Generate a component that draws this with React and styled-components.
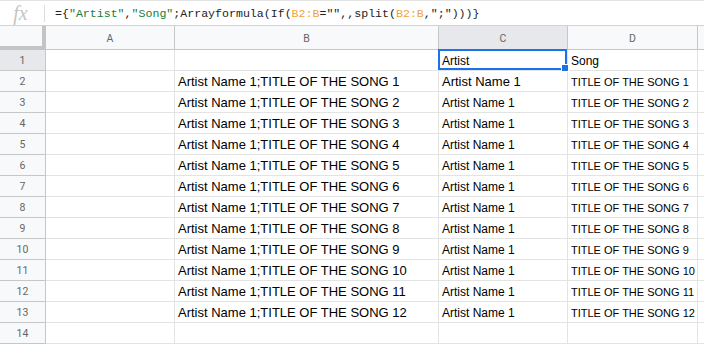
import React from "react";
import styled, { createGlobalStyle } from "styled-components";

const Global = createGlobalStyle`
  html, body { margin: 0; padding: 0; background: #fff; overflow: hidden; }
  body { font-family: "Liberation Sans", Arial, sans-serif; }
`;

const Page = styled.div`
  width: 704px;
  height: 348px;
  overflow: hidden;
  background: #fff;
`;

const FormulaBar = styled.div`
  height: 26px;
  box-sizing: border-box;
  border-top: 1px solid #e3e3e3;
  border-bottom: 1px solid #d3d3d3;
  display: flex;
  align-items: center;
`;

const Fx = styled.div`
  width: 45px;
  height: 17px;
  box-sizing: border-box;
  border-right: 1px solid #dadce0;
  display: flex;
  align-items: center;
  justify-content: center;
  font-family: "Liberation Serif", serif;
  font-style: italic;
  font-size: 20px;
  color: #c4c4c4;
  padding-right: 3px;
`;

const Formula = styled.div`
  padding-left: 10px;
  font-family: "Liberation Mono", monospace;
  font-size: 11.6px;
  color: #222;
  white-space: pre;
`;

const Str = styled.span`
  color: ${(p) => p.$c};
`;

const Grid = styled.div`
  display: grid;
  grid-template-columns: 46px 129px 264px 129px 130px 1fr;
  grid-auto-rows: 21px;
  grid-template-rows: 24px;
`;

const Corner = styled.div`
  box-sizing: border-box;
  background: #f8f9fa;
  border-right: 4px solid #c4c4c4;
  border-bottom: 4px solid #c4c4c4;
`;

const ColHead = styled.div`
  box-sizing: border-box;
  background: ${(p) => (p.$sel ? "#e6e8eb" : "#f8f9fa")};
  border-right: 1px solid #c7c7c7;
  border-bottom: 1px solid #c7c7c7;
  display: flex;
  align-items: center;
  justify-content: center;
  padding-top: 1px;
  font-family: Roboto, "Liberation Sans", sans-serif;
  font-size: 10.5px;
  color: #666;
`;

const RowHead = styled.div`
  box-sizing: border-box;
  background: ${(p) => (p.$sel ? "#e6e8eb" : "#f8f9fa")};
  border-right: 1px solid #c7c7c7;
  border-bottom: 1px solid #c7c7c7;
  display: flex;
  align-items: center;
  justify-content: center;
  font-family: Roboto, "Liberation Sans", sans-serif;
  font-size: 10.5px;
  color: #666;
`;

const Cell = styled.div`
  position: relative;
  box-sizing: border-box;
  border-right: 1px solid #e2e3e3;
  border-bottom: 1px solid #e2e3e3;
  display: flex;
  align-items: flex-end;
  padding: 0 3px 1px 3px;
  white-space: nowrap;
  overflow: hidden;
  font-family: "Liberation Sans", Arial, sans-serif;
  font-size: ${(p) => p.$size || 13}px;
  line-height: 16px;
  color: #000;
`;

const Selection = styled.div`
  position: absolute;
  left: -1px;
  top: -1px;
  right: 0;
  bottom: 0;
  border: 2px solid #1a73e8;
  pointer-events: none;
`;

const Handle = styled.div`
  position: absolute;
  right: -4px;
  bottom: -4px;
  width: 6px;
  height: 6px;
  background: #1a73e8;
  border: 1px solid #fff;
`;

const SelCell = styled(Cell)`
  overflow: visible;
  z-index: 2;
`;

const cols = ["A", "B", "C", "D", ""];
const songs = Array.from({ length: 12 }, (_, i) => i + 1);

export default function App() {
  return (
    <Page>
      <Global />
      <FormulaBar>
        <Fx>fx</Fx>
        <Formula>
          {"={"}
          <Str $c="#188038">"Artist"</Str>
          {","}
          <Str $c="#188038">"Song"</Str>
          {";Arrayformula(If("}
          <Str $c="#f2a33a">B2:B</Str>
          {'="",,split('}
          <Str $c="#f2a33a">B2:B</Str>
          {',";")))}'}
        </Formula>
      </FormulaBar>
      <Grid>
        <Corner />
        {cols.map((c, i) => (
          <ColHead key={i} $sel={c === "C"}>
            {c}
          </ColHead>
        ))}
        <RowHead $sel>1</RowHead>
        <Cell />
        <Cell />
        <SelCell $size={12}>
          Artist
          <Selection>
            <Handle />
          </Selection>
        </SelCell>
        <Cell $size={12}>Song</Cell>
        <Cell />
        {songs.map((n) => (
          <React.Fragment key={n}>
            <RowHead>{n + 1}</RowHead>
            <Cell />
            <Cell>{`Artist Name 1;TITLE OF THE SONG ${n}`}</Cell>
            <Cell $size={n === 1 ? 13 : 12}>Artist Name 1</Cell>
            <Cell $size={11}>{`TITLE OF THE SONG ${n}`}</Cell>
            <Cell />
          </React.Fragment>
        ))}
        <RowHead>14</RowHead>
        <Cell />
        <Cell />
        <Cell />
        <Cell />
        <Cell />
      </Grid>
    </Page>
  );
}
